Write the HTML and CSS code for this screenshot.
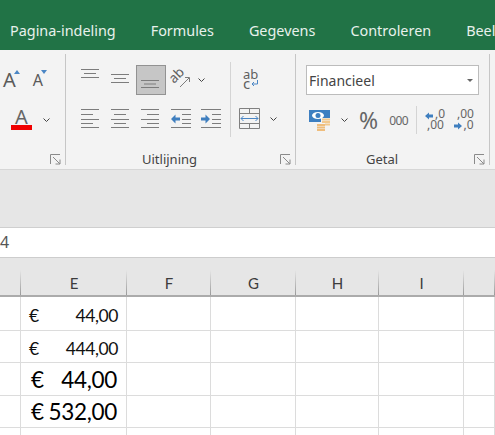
FILE: index.html
```html
<!DOCTYPE html>
<html lang="nl">
<head>
  <meta charset="UTF-8" />
  <title>Excel</title>
  <link rel="stylesheet" href="styles.css">
</head>
<body>
  <div class="tabs">
    <span>Pagina-indeling</span>
    <span>Formules</span>
    <span>Gegevens</span>
    <span>Controleren</span>
    <span>Beeld</span>
  </div>

  <div class="ribbon">
    <!-- Lettertype (cut off on the left) -->
    <section class="group group-font">
      <div class="tools">
        <div class="row font-size">
          <span class="big-a">A</span><i class="tri"></i>
          <span class="small-a">A</span><i class="tri down"></i>
        </div>
        <div class="row font-color">
          <span class="color-a">A</span>
          <svg class="chev" width="7" height="4"><path d="M.5 .5l3 3 3-3"/></svg>
        </div>
      </div>
      <div class="foot">
        <svg class="launcher" width="11" height="11"><path d="M.5 10V.5H10M3 3l7 7M5.500 10H10V5.500"/></svg>
      </div>
    </section>

    <!-- Uitlijning -->
    <section class="group group-align">
      <div class="tools split">
        <div class="part-align">
          <div class="row">
            <svg class="cell" width="30" height="30"><path d="M5 4.500h18M8 8.500h12M5 12.500h18"/></svg>
            <svg class="cell" width="30" height="30"><path d="M5 9.500h18M8 13.500h12M5 17.500h18"/></svg>
            <svg class="cell on" width="30" height="30"><path d="M5 15.500h18M8 19h12M5 22.500h18"/></svg>
            <svg class="cell" width="30" height="30">
              <text class="tilt" transform="translate(8 19) rotate(-45)">ab</text>
              <path d="M14 22L23 13M19 12.500h4.500V17"/>
            </svg>
            <svg class="chev" width="7" height="4"><path d="M.5 .5l3 3 3-3"/></svg>
          </div>
          <div class="row">
            <svg class="cell" width="30" height="30"><path d="M5 5.500h18M5 10.500h12M5 15.500h18M5 19.500h12M5 23.500h18"/></svg>
            <svg class="cell" width="30" height="30"><path d="M5 5.500h18M8 10.500h12M5 15.500h18M8 19.500h12M5 23.500h18"/></svg>
            <svg class="cell" width="30" height="30"><path d="M5 5.500h18M11 10.500h12M5 15.500h18M11 19.500h12M5 23.500h18"/></svg>
            <svg class="cell" width="30" height="30">
              <path d="M5 5.500h20M16 10.500h9M16 15.500h9M16 19.500h9M5 23.500h20"/>
              <path class="blue" d="M5 15l4.500-4.500v3h4.500v3H9.500v3z"/>
            </svg>
            <svg class="cell" width="30" height="30">
              <path d="M5 5.500h20M16 10.500h9M16 15.500h9M16 19.500h9M5 23.500h20"/>
              <path class="blue" d="M14 15l-4.500-4.500v3H5v3h4.500v3z"/>
            </svg>
          </div>
        </div>
        <div class="part-wrap">
          <div class="row">
            <svg class="wrap-icon" width="21" height="30">
              <text class="wrap-ab" x="4" y="14">ab</text>
              <text class="wrap-c" x="4" y="24">c</text>
              <path class="blue-line" d="M18.500 15v4H13M15 17l-2 2 2 2"/>
            </svg>
          </div>
          <div class="row">
            <svg class="merge-icon" width="21" height="30">
              <path d="M.5 4.500h20v20H.5zM.5 9.500h20M.5 19.500h20M10.500 4.500v5M10.500 19.500v5"/>
              <path class="blue-line" d="M2 14.500h17M4.500 12L2 14.500 4.500 17M16.500 12L19 14.500 16.500 17"/>
            </svg>
            <svg class="chev merge-chev" width="7" height="4"><path d="M.5 .5l3 3 3-3"/></svg>
          </div>
        </div>
      </div>
      <div class="foot">
        <span class="label label-align">Uitlijning</span>
        <svg class="launcher" width="11" height="11"><path d="M.5 10V.5H10M3 3l7 7M5.500 10H10V5.500"/></svg>
      </div>
    </section>

    <!-- Getal -->
    <section class="group group-number">
      <div class="tools">
        <div class="combo">
          <span>Financieel</span>
          <i class="combo-arrow"></i>
        </div>
        <div class="row number-row">
          <svg class="money" width="22" height="21">
            <rect width="21" height="12" fill="#3d7fc1"/>
            <ellipse cx="9" cy="5.500" rx="6" ry="3.500" fill="#fff"/>
            <circle cx="9" cy="5.500" r="2.500" fill="#3d7fc1"/>
            <rect x="12" y="8" width="10" height="8" fill="#f3f3f3"/>
            <path d="M13 9.500h8M13 12h8M13 14.500h8" stroke="#f2c98f" stroke-width="2"/>
            <rect x="7" y="13" width="9" height="8" fill="#f3f3f3"/>
            <path d="M8 15h8M8 17.500h8M8 20h8" stroke="#efbd7c" stroke-width="2"/>
          </svg>
          <svg class="chev money-chev" width="7" height="4"><path d="M.5 .5l3 3 3-3"/></svg>
          <span class="percent">%</span>
          <span class="thousand">000</span>
          <i class="divider"></i>
          <svg class="decimal" width="22" height="24">
            <path class="blue" d="M0 8l4-3.500v2h4v3H4v2z"/>
            <text class="dec-text" x="10" y="10">,0</text>
            <text class="dec-text" x="2" y="21">,00</text>
          </svg>
          <svg class="decimal" width="22" height="24">
            <text class="dec-text" x="3" y="10">,00</text>
            <path class="blue" d="M8 18l-4-3.500v2H0v3h4v2z"/>
            <text class="dec-text" x="9.500" y="21">,0</text>
          </svg>
        </div>
      </div>
      <div class="foot">
        <span class="label label-number">Getal</span>
        <svg class="launcher" width="11" height="11"><path d="M.5 10V.5H10M3 3l7 7M5.500 10H10V5.500"/></svg>
      </div>
    </section>
  </div>

  <div class="band"></div>
  <div class="formula-bar">4</div>

  <table class="sheet">
    <colgroup>
      <col class="c-d"><col class="c-e"><col class="c-f"><col class="c-g"><col class="c-h"><col class="c-i"><col class="c-j">
    </colgroup>
    <thead>
      <tr><th></th><th>E</th><th>F</th><th>G</th><th>H</th><th>I</th><th></th></tr>
    </thead>
    <tbody>
      <tr class="r1"><td></td><td><div class="money-cell"><span>€</span><span>44,00</span></div></td><td></td><td></td><td></td><td></td><td></td></tr>
      <tr class="r2"><td></td><td><div class="money-cell"><span>€</span><span>444,00</span></div></td><td></td><td></td><td></td><td></td><td></td></tr>
      <tr class="r3"><td></td><td><div class="money-cell large"><span>€</span><span>44,00</span></div></td><td></td><td></td><td></td><td></td><td></td></tr>
      <tr class="r4"><td></td><td><div class="money-cell large"><span>€</span><span>532,00</span></div></td><td></td><td></td><td></td><td></td><td></td></tr>
      <tr class="r5"><td></td><td></td><td></td><td></td><td></td><td></td><td></td></tr>
    </tbody>
  </table>
</body>
</html>
```

FILE: styles.css
```css
html, body {
  margin: 0;
  padding: 0;
  width: 495px;
  height: 435px;
  overflow: hidden;
  background-color: #fff;
  font-family: "Noto Sans", "Open Sans", sans-serif;
}

/* Green tab strip */
.tabs {
  height: 50px;
  box-sizing: border-box;
  padding: 21px 0 0 10px;
  display: flex;
  gap: 35px;
  background-color: #217346;
  color: #e8f1ec;
  font-size: 14.4px;
  line-height: 20px;
  white-space: nowrap;
  overflow: hidden;
}

/* Ribbon */
.ribbon {
  height: 120px;
  box-sizing: border-box;
  padding-top: 4px;
  display: flex;
  background-color: #f3f3f3;
  border-bottom: 1px solid #d6d6d6;
}

.group {
  height: 111px;
  box-sizing: border-box;
  border-right: 1px solid #c6c6c6;
  display: flex;
  flex-direction: column;
}

.group-font { width: 66px; }
.group-align { width: 230px; }
.group-number { width: 194px; }

.tools {
  flex: 1;
  padding-top: 11px;
}

.tools.split {
  display: flex;
  padding-top: 0;
}

.row {
  height: 30px;
  display: flex;
  align-items: center;
}

.row + .row {
  margin-top: 9px;
}

.part-align {
  width: 154px;
  height: 72px;
  margin-top: 8px;
  padding: 3px 0 0 10px;
  border-right: 1px solid #d4d4d4;
}

.part-wrap {
  padding: 11px 0 0 8px;
}

.cell {
  display: block;
  flex: none;
  fill: none;
  stroke: #7c7c7c;
  stroke-width: 1;
  overflow: visible;
}

.cell.on {
  box-sizing: border-box;
  background-color: #c6c6c6;
  border: 1px solid #929292;
}

.cell.on path {
  transform: translate(-1px, -1px);
}

.chev {
  flex: none;
  margin-left: 2px;
  fill: none;
  stroke: #444;
  stroke-width: 1;
}

.launcher {
  flex: none;
  fill: none;
  stroke: #8a8a8a;
  stroke-width: 1;
}

.blue {
  fill: #3f7fbf;
  stroke: none;
}

.blue-line {
  fill: none;
  stroke: #4a86c5;
  stroke-width: 1;
}

.tilt {
  font-size: 13.5px;
  fill: #5f5f5f;
  stroke: none;
}

/* Font group */
.font-size {
  align-items: flex-start;
  padding-left: 3px;
  color: #5a5a5a;
}

.big-a {
  font-size: 20px;
  line-height: 29px;
}

.small-a {
  margin-left: 13px;
  font-size: 16px;
  line-height: 31px;
}

.tri {
  margin: 5px 0 0 -2px;
  border: 3px solid transparent;
  border-top-width: 0;
  border-bottom: 4px solid #4a86c5;
}

.tri.down {
  border-top: 4px solid #4a86c5;
  border-bottom-width: 0;
}

.font-color {
  padding-left: 11px;
  margin-top: 9px;
}

.color-a {
  align-self: flex-start;
  width: 21px;
  height: 26px;
  box-sizing: border-box;
  border-bottom: 5px solid #f00000;
  color: #666;
  font-size: 20px;
  line-height: 25px;
  text-align: center;
}

.font-color .chev {
  margin: 2px 0 0 11px;
}

/* Wrap + merge */
.wrap-icon, .merge-icon {
  flex: none;
  fill: none;
  stroke: #808080;
  overflow: visible;
}

.wrap-ab {
  font-size: 13px;
  fill: #5f5f5f;
  stroke: none;
}

.wrap-c {
  font-size: 15px;
  fill: #5f5f5f;
  stroke: none;
}

.merge-chev {
  margin-left: 10px;
}

/* Number group */
.group-number .tools {
  padding-left: 10px;
}

.combo {
  width: 173px;
  height: 30px;
  box-sizing: border-box;
  border: 1px solid #bcbcbc;
  background-color: #fff;
  padding: 0 5px 0 2px;
  display: flex;
  align-items: center;
  justify-content: space-between;
  font-size: 14px;
  color: #444;
}

.combo-arrow {
  border: 3.500px solid transparent;
  border-top: 3.500px solid #666;
  border-bottom-width: 0;
}

.number-row {
  margin-top: 10px;
  padding-left: 3px;
  color: #666;
}

.money {
  flex: none;
  overflow: visible;
}

.money-chev {
  margin-left: 10px;
}

.percent {
  margin-left: 11px;
  font-size: 23px;
  line-height: 30px;
}

.thousand {
  margin-left: 11px;
  font-size: 12px;
  letter-spacing: -0.500px;
}

.divider {
  flex: none;
  width: 1px;
  height: 28px;
  margin-left: 8px;
  background-color: #d4d4d4;
}

.decimal {
  flex: none;
  margin-left: 8px;
  overflow: visible;
}

.decimal + .decimal {
  margin-left: 7px;
}

.dec-text {
  font-size: 12px;
  fill: #666;
}

/* Group footer */
.foot {
  height: 12px;
  padding-right: 4px;
  display: flex;
  align-items: center;
  justify-content: flex-end;
}

.label {
  margin-right: auto;
  font-size: 13px;
  line-height: 12px;
  color: #444;
}

.label-align { margin-left: 76px; }
.label-number { margin-left: 70px; }

/* Empty band and formula bar */
.band {
  height: 58px;
  box-sizing: border-box;
  background-color: #e6e6e6;
  border-bottom: 1px solid #cfcfcf;
}

.formula-bar {
  height: 30px;
  box-sizing: border-box;
  border-bottom: 1px solid #cdcdcd;
  background-color: #fff;
  font-size: 16px;
  line-height: 29px;
  color: #555;
}

/* Worksheet */
.sheet {
  table-layout: fixed;
  width: 495px;
  border-collapse: separate;
  border-spacing: 0;
  font-family: Lato, "Liberation Sans", sans-serif;
}

.c-d { width: 21px; }
.c-e { width: 106px; }
.c-f { width: 84px; }
.c-g { width: 85px; }
.c-h { width: 83px; }
.c-i { width: 85px; }
.c-j { width: 31px; }

.sheet th {
  height: 39px;
  box-sizing: border-box;
  padding: 13px 0 0;
  background-color: #e6e6e6;
  background-image: linear-gradient(#e6e6e6, #9a9a9a);
  background-repeat: no-repeat;
  background-size: 1px 25px;
  background-position: right bottom;
  border-bottom: 2px solid #ababab;
  font-size: 15px;
  font-weight: 400;
  line-height: 24px;
  color: #3c3c3c;
}

.sheet td {
  box-sizing: border-box;
  padding: 0;
  border-right: 1px solid #dcdcdc;
  border-bottom: 1px solid #dcdcdc;
}

.r1 td { height: 34px; }
.r2 td { height: 32px; }
.r3 td { height: 33px; }
.r4 td { height: 32px; }
.sheet .r5 td { height: 7px; border-bottom: 0; }

.money-cell {
  display: flex;
  justify-content: space-between;
  padding: 4px 8px 0;
  font-size: 17.500px;
  letter-spacing: -0.400px;
  line-height: 24px;
  color: #111;
}

.money-cell.large {
  padding: 1px 9px 0 10px;
  font-size: 22.500px;
  letter-spacing: -0.300px;
  line-height: 28px;
  color: #000;
}
```
